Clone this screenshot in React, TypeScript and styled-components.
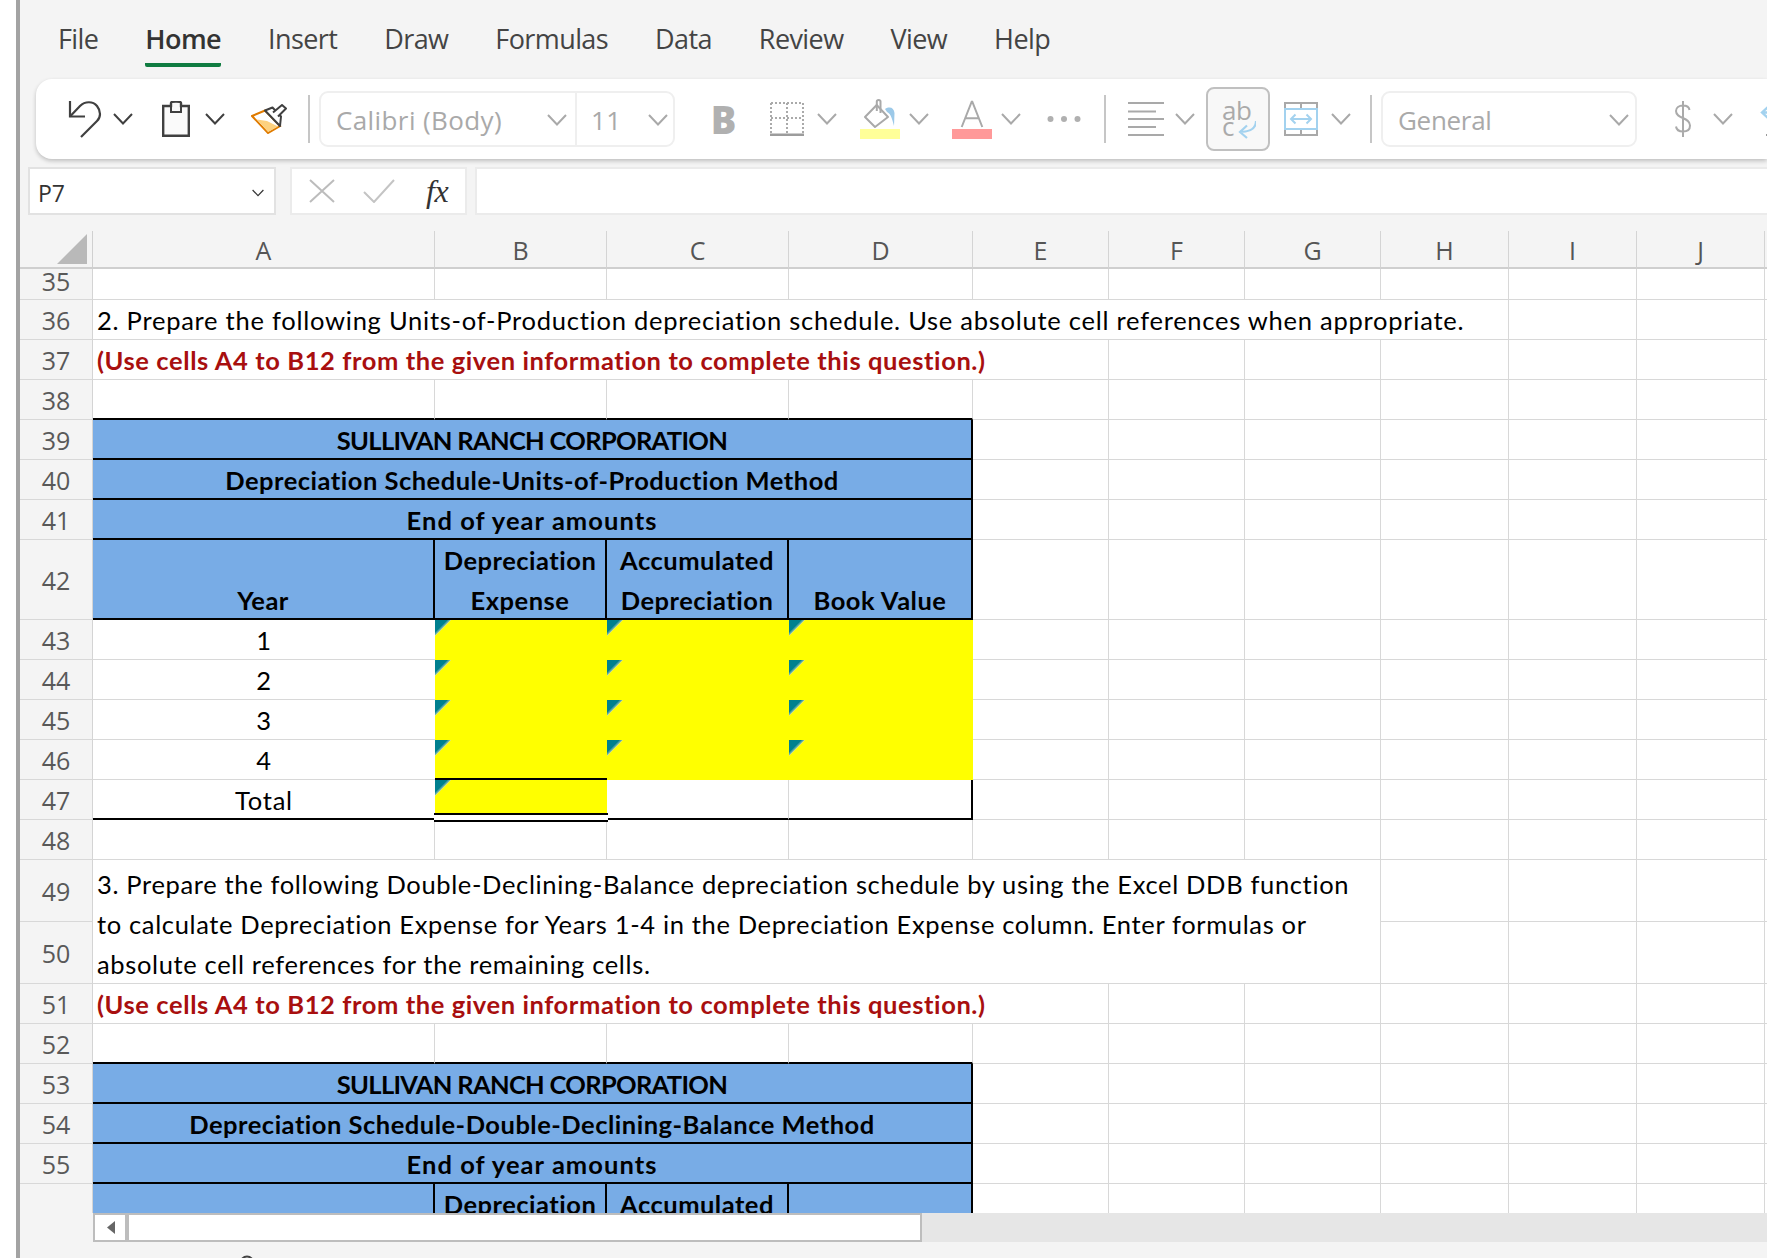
import React from "react";
import styled, { createGlobalStyle } from "styled-components";

const Global = createGlobalStyle`
  html, body { margin: 0; padding: 0; background: #fff; }
  * { box-sizing: border-box; }
`;

const Page = styled.div`
  width: 1767px; height: 1258px; overflow: hidden; background: #fff; padding-left: 16px;
  font-family: "Open Sans", "Liberation Sans", sans-serif;
`;
const Shell = styled.div`
  height: 100%; border-left: 4px solid #a3a3a3; background: #f4f4f4;
  display: flex; flex-direction: column; overflow: hidden;
`;
const TabBar = styled.nav`
  height: 79px; flex: none; display: flex; gap: 47px; padding-left: 38px; padding-top: 20px;
`;
const Tab = styled.div<{ $active?: boolean }>`
  height: 47px; font-size: 27px; line-height: 38px; letter-spacing: -0.6px; color: #444;
  font-weight: ${(p) => (p.$active ? 600 : 400)};
  ${(p) => p.$active && `color: #333; border-bottom: 4px solid #107c41; border-radius: 0 0 2px 2px;`}
`;
const Ribbon = styled.div`
  height: 80px; flex: none; margin-left: 16px; background: #fff; border-radius: 16px 0 0 16px;
  box-shadow: 0 2px 4px rgba(0, 0, 0, 0.22); display: flex; align-items: center; overflow: hidden;
`;
const Slot = styled.div<{ $ml: number; $w: number }>`
  margin-left: ${(p) => p.$ml}px; width: ${(p) => p.$w}px; flex: none; display: flex;
  align-items: center; justify-content: center;
  svg { display: block; flex: none; }
`;
const Sep = styled.div<{ $ml: number }>`
  margin-left: ${(p) => p.$ml}px; width: 2px; height: 48px; background: #c6c6c6; flex: none;
`;
const Combo = styled.div<{ $ml: number; $w: number; $ls?: number }>`
  margin-left: ${(p) => p.$ml}px; width: ${(p) => p.$w}px; height: 56px; flex: none; display: flex;
  align-items: center; border: 2px solid #efefef; border-radius: 9px; color: #a9a9a9;
  font-size: 26px; letter-spacing: ${(p) => p.$ls ?? -0.3}px;
`;
const ComboPart = styled.div<{ $w?: number; $pl: number; $pr: number }>`
  height: 100%; display: flex; align-items: center; justify-content: space-between;
  padding: 1px ${(p) => p.$pr}px 0 ${(p) => p.$pl}px;
  ${(p) => (p.$w ? `width: ${p.$w}px; flex: none;` : "flex: 1;")}
  & + & { border-left: 2px solid #efefef; }
`;
const BoldGlyph = styled.div`
  font-size: 38px; font-weight: 800; line-height: 40px; color: #b0b0b0; font-family: "Open Sans", sans-serif;
  letter-spacing: -1px;
`;
const WrapButton = styled.div`
  margin-left: 11px; width: 64px; height: 64px; flex: none; border: 2px solid #c0c0c0; border-radius: 8px;
  background: #f8f8f8; display: flex; align-items: center; justify-content: center;
`;
const FormulaRow = styled.div`
  height: 48px; flex: none; margin: 8px 0 16px 8px; display: flex;
`;
const NameBox = styled.div`
  width: 248px; border: 2px solid #e2e2e2; background: #fff; display: flex; align-items: center;
  justify-content: space-between; padding: 3px 10px 0 8px; font-size: 23px; color: #333;
`;
const FnBox = styled.div`
  margin-left: 14px; width: 177px; border: 2px solid #ebebeb; background: #fff; display: flex; align-items: center;
`;
const FxLabel = styled.span`
  font-family: "Liberation Serif", serif; font-style: italic; font-size: 32px; color: #333;
  margin-left: 31px; line-height: 40px; letter-spacing: -0.5px;
`;
const FormulaInput = styled.div`
  margin-left: 8px; flex: 1; margin-right: -6px; border: 2px solid #ebebeb; background: #fff;
`;

const Sheet = styled.div`
  height: 982px; flex: none; overflow: hidden; display: grid; background: #fff;
  grid-template-columns: 73px 342px 172px 182px 184px 136px 136px 136px 128px 128px 128px 1fr;
  grid-template-rows: 38px 31px 40px 40px 40px 40px 40px 40px 80px 40px 40px 40px 40px 40px 40px 62px 62px 40px 40px 40px 40px 40px 80px;
  font-family: "Lato", "Liberation Sans", sans-serif;
`;
const CornerCell = styled.div`
  background: #f4f4f4; border-right: 1px solid #d0d0d0; border-bottom: 2px solid #cfcfcf;
  display: flex; justify-content: flex-end; padding: 3px 5px 0 0;
`;
const CornerMark = styled.div`
  width: 30px; height: 30px; background: #b9b9b9; clip-path: polygon(100% 0, 100% 100%, 0 100%);
`;
const ColHead = styled.div`
  background: #f4f4f4; border-right: 1px solid #d4d4d4; border-bottom: 2px solid #cfcfcf;
  display: flex; align-items: center; justify-content: center; font-family: "Open Sans", sans-serif;
  font-size: 25px; color: #555; padding-top: 2px;
`;
const RowHead = styled.div<{ $pb?: number }>`
  background: #f4f4f4; border-right: 1px solid #d4d4d4; border-bottom: 1px solid #d8d8d8;
  display: flex; align-items: center; justify-content: center; font-family: "Open Sans", sans-serif;
  font-size: 25px; color: #595959; padding: 0 0 ${(p) => p.$pb ?? 0}px 0;
`;

type CellProps = {
  $span?: number; $rows?: number; $bg?: string; $bb?: boolean; $br?: boolean; $bare?: boolean;
  $center?: boolean; $bold?: boolean; $red?: boolean; $top?: number; $ls?: number;
};
const Cell = styled.div<CellProps>`
  position: relative; min-width: 0; white-space: nowrap; line-height: 40px; color: #000;
  font-size: 25.5px; padding: ${(p) => p.$top ?? 0}px 4px 0;
  letter-spacing: ${(p) => p.$ls ?? (p.$bold ? 0.5 : 0.75)}px;
  ${(p) => p.$span && `grid-column: span ${p.$span};`}
  ${(p) => p.$rows && `grid-row: span ${p.$rows};`}
  background: ${(p) => p.$bg ?? "#fff"};
  border-right: ${(p) => (p.$br ? "2px solid #000" : p.$bare ? "0" : "1px solid #d8d8d8")};
  border-bottom: ${(p) => (p.$bb ? "2px solid #000" : p.$bare ? "0" : "1px solid #d8d8d8")};
  ${(p) => p.$center && "text-align: center;"}
  ${(p) => p.$bold && "font-weight: 700;"}
  ${(p) => p.$red && "color: #a80f0f;"}
`;
const TotalCell = styled(Cell)`
  &::after {
    content: ""; position: absolute; z-index: 1; left: -1px; right: -1px; bottom: -2px; height: 5px;
    background: #fff; border-top: 2px solid #000; border-bottom: 2px solid #000;
  }
`;
const Marker = styled.div`
  position: absolute; top: 0; left: 0; width: 16px; height: 16px;
  background: linear-gradient(135deg, #00808f 0%, #00808f 38%, #7fb9a8 47%, #f4f4d0 52%);
  clip-path: polygon(0 0, 100% 0, 0 100%);
`;
const YearRule = styled.span`
  position: absolute; left: 0; right: 0; bottom: 0; height: 1px; background: #d8d8d8;
`;

const ScrollRow = styled.div`
  height: 29px; flex: none; display: flex; padding-left: 73px;
`;
const Track = styled.div`
  width: 829px; background: #fff; border: 2px solid #bdbdbd; display: flex; flex: none;
`;
const ScrollButton = styled.div`
  width: 34px; border-right: 4px solid #bdbdbd; display: flex; align-items: center; justify-content: center;
`;
const ScrollArrow = styled.div`
  width: 8px; height: 13px; background: #666; clip-path: polygon(100% 0, 100% 100%, 0 50%);
  margin-left: 2px;
`;
const TrackRest = styled.div`
  flex: 1; background: #e6e6e6;
`;
const Footer = styled.div`
  flex: 1; min-height: 0; overflow: hidden; padding: 13px 0 0 219px;
  svg { display: block; }
`;

const BLUE = "#78ace6";
const YELLOW = "#ffff00";
const DARK = "#404040";
const GREY = "#a9a9a9";
const SKY = "#a3d2ef";

const Chevron = ({ color = GREY, size = 20 }: { color?: string; size?: number }) => (
  <svg width={size} height={12} viewBox="0 0 20 12">
    <path d="M1 1 L10 10.5 L19 1" fill="none" stroke={color} strokeWidth="2" />
  </svg>
);
const ChevSlot = ({ ml, color }: { ml: number; color?: string }) => (
  <Slot $ml={ml} $w={20}><Chevron color={color} /></Slot>
);

const UndoIcon = () => (
  <svg width="34" height="38" viewBox="0 0 34 38">
    <path d="M2 1 V16.5 H17" fill="none" stroke={DARK} strokeWidth="2.2" />
    <path d="M2 16.5 L12 6 C17 1 25 1 29 6 C33 11 33 17 29 21 L13 37" fill="none" stroke={DARK} strokeWidth="2.2" />
  </svg>
);
const ClipIcon = () => (
  <svg width="28" height="36" viewBox="0 0 28 36">
    <path d="M1.2 5 H9 V2 C9 0.8 10 0.5 14 0.5 C18 0.5 19 0.8 19 2 V5 H26.8 V34.8 H1.2 Z" fill="#fafafa" stroke={DARK} strokeWidth="2.4" />
    <path d="M9 5 V11 H19 V5" fill="none" stroke={DARK} strokeWidth="2" />
  </svg>
);
const BrushIcon = () => (
  <svg width="36" height="30" viewBox="0 0 36 30">
    <path d="M1 12 L14 6.5 L29 22 L17 29 Z" fill="#fff" stroke="#e07b00" strokeWidth="2" />
    <path d="M6 15.5 L16 17 L27 22.5 L17 28 Z" fill="#fdd17f" />
    <path d="M14 6.5 L21.5 3.5 L30 12.5 L29 22 Z" fill="#fff" stroke={DARK} strokeWidth="2" strokeLinejoin="round" />
    <path d="M22 8.5 L31 1 L35 4.5 L27 12.5" fill="#fff" stroke={DARK} strokeWidth="2" strokeLinejoin="round" />
  </svg>
);
const BordersIcon = () => (
  <svg width="34" height="34" viewBox="0 0 34 34">
    <g fill="none" stroke="#aaa" strokeWidth="2" strokeDasharray="2 2">
      <path d="M1 1 H33 V31 M1 1 V31 M17 1 V31 M1 16 H33" />
    </g>
    <rect x="0" y="31.5" width="34" height="2.5" fill="#9c9c9c" />
  </svg>
);
const FillIcon = () => (
  <svg width="40" height="40" viewBox="0 0 40 40">
    <path d="M5 18 L16.7 6 L28 18 L15 28 Z" fill="none" stroke={GREY} strokeWidth="2" strokeLinejoin="round" />
    <path d="M16.8 12 V2.5 C16.8 0.5 20.5 0.5 20.5 2.5 V14" fill="none" stroke={GREY} strokeWidth="2" />
    <path d="M25 10 C30 7 34 9 34.5 14 L34 27 C32.5 22 31.5 15 27 13 Z" fill="#9cc9e8" />
    <rect x="0" y="30" width="40" height="10" fill="#ffff99" />
  </svg>
);
const FontColorIcon = () => (
  <svg width="40" height="40" viewBox="0 0 40 40">
    <path d="M9.7 28 L19.7 2.7 H20.3 L30.3 28 M13 19.3 H27" fill="none" stroke={GREY} strokeWidth="2" />
    <rect x="0" y="30" width="40" height="10" fill="#ff9999" />
  </svg>
);
const DotsIcon = () => (
  <svg width="34" height="8" viewBox="0 0 34 8">
    <circle cx="3.5" cy="4" r="3" fill="#b0b0b0" /><circle cx="17" cy="4" r="3" fill="#b0b0b0" /><circle cx="30.5" cy="4" r="3" fill="#b0b0b0" />
  </svg>
);
const AlignIcon = () => (
  <svg width="36" height="34" viewBox="0 0 36 34">
    <path d="M0 1 H36 M0 9.5 H28 M0 17 H36 M0 25 H28 M0 33 H36" fill="none" stroke="#a9a9a9" strokeWidth="2" />
  </svg>
);
const WrapIcon = () => (
  <svg width="36" height="56" viewBox="0 -8 36 56">
    <text x="2" y="21" fontFamily="Open Sans, sans-serif" fontSize="26" fill="#aaa" letterSpacing="-0.5">ab</text>
    <text x="2" y="37" fontFamily="Open Sans, sans-serif" fontSize="26" fill="#aaa">c</text>
    <path d="M36 22 C36 30 30 33 20 33 M27 26.5 L20 33 L27 39" fill="none" stroke={SKY} strokeWidth="2.2" />
  </svg>
);
const MergeIcon = () => (
  <svg width="34" height="34" viewBox="0 0 34 34">
    <rect x="1" y="1" width="32" height="32" fill="none" stroke="#a9a9a9" strokeWidth="2" />
    <path d="M17 1 V33" stroke="#a9a9a9" strokeWidth="2" />
    <rect x="1" y="7" width="32" height="20" fill="#fff" stroke={SKY} strokeWidth="2" />
    <path d="M7 17 H27 M11.5 12.5 L7 17 L11.5 21.5 M22.5 12.5 L27 17 L22.5 21.5" fill="none" stroke={SKY} strokeWidth="2" />
  </svg>
);
const DollarIcon = () => (
  <svg width="18" height="36" viewBox="0 0 18 36">
    <path d="M15.5 9 C15 5.5 12.5 4.5 9 4.5 C5 4.5 2 6.5 2 10 C2 18 16 16 16 24.5 C16 28.5 13 30.5 9 30.5 C5 30.5 2.5 29 2 25.5 M9 0 V36" fill="none" stroke="#aaa" strokeWidth="2" />
  </svg>
);
const NextIcon = () => (
  <svg width="30" height="36" viewBox="0 0 30 36">
    <path d="M11 3 L2 11.5 L11 20 M2 11.5 H24" fill="none" stroke={SKY} strokeWidth="2.4" />
    <rect x="6" y="33" width="2" height="2" fill="#999" />
  </svg>
);
const CancelIcon = () => (
  <svg width="26" height="24" viewBox="0 0 26 24">
    <path d="M1 1 L25 23 M25 1 L1 23" fill="none" stroke="#bcbcbc" strokeWidth="2" />
  </svg>
);
const ConfirmIcon = () => (
  <svg width="32" height="24" viewBox="0 0 32 24">
    <path d="M1 13 L11 23 L31 1" fill="none" stroke="#c4c4c4" strokeWidth="2" />
  </svg>
);

const blanks = (n: number, key: string) =>
  Array.from({ length: n }, (_, i) => <Cell key={key + i} />);
const head = (n: number) => <RowHead key={"h" + n}>{n}</RowHead>;

const plain = (n: number) => [head(n), ...blanks(11, "r" + n)];

const longRow = (n: number, text: string, span: number, red?: boolean) => [
  head(n),
  <Cell key={"t" + n} $span={span} $bold={red} $red={red} $ls={red ? 0.59 : undefined}>{text}</Cell>,
  ...blanks(11 - span, "r" + n),
];

const aboveTable = (n: number) => [
  head(n),
  <Cell key={n + "a"} $bb />,
  <Cell key={n + "b"} $bb />,
  <Cell key={n + "c"} $bb />,
  <Cell key={n + "d"} $bb />,
  ...blanks(7, "r" + n),
];

const titleRow = (n: number, text: string, ls?: number) => [
  head(n),
  <Cell key={"t" + n} $span={4} $bg={BLUE} $bb $br $center $bold $ls={ls}>{text}</Cell>,
  ...blanks(7, "r" + n),
];

const columnHeads = (n: number) => [
  head(n),
  <Cell key={n + "a"} $bg={BLUE} $bb $br $center $bold $top={40}>Year</Cell>,
  <Cell key={n + "b"} $bg={BLUE} $bb $br $center $bold>Depreciation<br />Expense</Cell>,
  <Cell key={n + "c"} $bg={BLUE} $bb $br $center $bold>Accumulated<br />Depreciation</Cell>,
  <Cell key={n + "d"} $bg={BLUE} $bb $br $center $bold $top={40}>Book Value</Cell>,
  ...blanks(7, "r" + n),
];

const yearRow = (n: number, year: number) => [
  head(n),
  <Cell key={n + "a"} $center $bare>{year}<YearRule /></Cell>,
  <Cell key={n + "b"} $bg={YELLOW} $bare $bb={year === 4}><Marker /></Cell>,
  <Cell key={n + "c"} $bg={YELLOW} $bare><Marker /></Cell>,
  <Cell key={n + "d"} $bg={YELLOW} $bare><Marker /></Cell>,
  ...blanks(7, "r" + n),
];

const App = () => (
  <Page>
    <Global />
    <Shell>
      <TabBar>
        <Tab>File</Tab>
        <Tab $active>Home</Tab>
        <Tab>Insert</Tab>
        <Tab>Draw</Tab>
        <Tab>Formulas</Tab>
        <Tab>Data</Tab>
        <Tab>Review</Tab>
        <Tab>View</Tab>
        <Tab>Help</Tab>
      </TabBar>
      <Ribbon>
        <Slot $ml={32} $w={34}><UndoIcon /></Slot>
        <ChevSlot ml={11} color={DARK} />
        <Slot $ml={29} $w={28}><ClipIcon /></Slot>
        <ChevSlot ml={15} color={DARK} />
        <Slot $ml={26} $w={36}><BrushIcon /></Slot>
        <Sep $ml={21} />
        <Combo $ml={9} $w={356} $ls={0.4}>
          <ComboPart $w={254} $pl={15} $pr={8}>Calibri (Body)<Chevron /></ComboPart>
          <ComboPart $pl={14} $pr={5}>11<Chevron /></ComboPart>
        </Combo>
        <Slot $ml={37} $w={22}><BoldGlyph>B</BoldGlyph></Slot>
        <Slot $ml={36} $w={34}><BordersIcon /></Slot>
        <ChevSlot ml={13} />
        <Slot $ml={23} $w={40}><FillIcon /></Slot>
        <ChevSlot ml={9} />
        <Slot $ml={23} $w={40}><FontColorIcon /></Slot>
        <ChevSlot ml={9} />
        <Slot $ml={26} $w={34}><DotsIcon /></Slot>
        <Sep $ml={23} />
        <Slot $ml={22} $w={36}><AlignIcon /></Slot>
        <ChevSlot ml={11} />
        <WrapButton><WrapIcon /></WrapButton>
        <Slot $ml={14} $w={34}><MergeIcon /></Slot>
        <ChevSlot ml={13} />
        <Sep $ml={19} />
        <Combo $ml={9} $w={256}>
          <ComboPart $pl={15} $pr={6}>General<Chevron /></ComboPart>
        </Combo>
        <Slot $ml={37} $w={18}><DollarIcon /></Slot>
        <ChevSlot ml={21} />
        <Slot $ml={27} $w={30}><NextIcon /></Slot>
      </Ribbon>
      <FormulaRow>
        <NameBox>P7<Chevron color="#333" size={12} /></NameBox>
        <FnBox>
          <Slot $ml={17} $w={26}><CancelIcon /></Slot>
          <Slot $ml={28} $w={32}><ConfirmIcon /></Slot>
          <FxLabel>fx</FxLabel>
        </FnBox>
        <FormulaInput />
      </FormulaRow>
      <Sheet>
        <CornerCell><CornerMark /></CornerCell>
        {"ABCDEFGHIJ".split("").map((c) => <ColHead key={c}>{c}</ColHead>)}
        <ColHead />
        <RowHead $pb={7}>35</RowHead>
        {blanks(11, "r35")}
        {longRow(36, "2. Prepare the following Units-of-Production depreciation schedule. Use absolute cell references when appropriate.", 8)}
        {longRow(37, "(Use cells A4 to B12 from the given information to complete this question.)", 5, true)}
        {aboveTable(38)}
        {titleRow(39, "SULLIVAN RANCH CORPORATION", -0.7)}
        {titleRow(40, "Depreciation Schedule-Units-of-Production Method")}
        {titleRow(41, "End of year amounts", 1.05)}
        {columnHeads(42)}
        {yearRow(43, 1)}
        {yearRow(44, 2)}
        {yearRow(45, 3)}
        {yearRow(46, 4)}
        {head(47)}
        <Cell $center $bb $bare>Total</Cell>
        <TotalCell $bg={YELLOW} $bare><Marker /></TotalCell>
        <Cell $bb />
        <Cell $bb $br />
        {blanks(7, "r47")}
        {plain(48)}
        {head(49)}
        <Cell $span={7} $rows={2} $top={4} $ls={0.65}>
          3. Prepare the following Double-Declining-Balance depreciation schedule by using the Excel DDB function<br />
          to calculate Depreciation Expense for Years 1-4 in the Depreciation Expense column. Enter formulas or<br />
          absolute cell references for the remaining cells.
        </Cell>
        {blanks(4, "r49")}
        {head(50)}
        {blanks(4, "r50")}
        {longRow(51, "(Use cells A4 to B12 from the given information to complete this question.)", 5, true)}
        {aboveTable(52)}
        {titleRow(53, "SULLIVAN RANCH CORPORATION", -0.7)}
        {titleRow(54, "Depreciation Schedule-Double-Declining-Balance Method")}
        {titleRow(55, "End of year amounts", 1.05)}
        {columnHeads(56)}
      </Sheet>
      <ScrollRow>
        <Track>
          <ScrollButton><ScrollArrow /></ScrollButton>
        </Track>
        <TrackRest />
      </ScrollRow>
      <Footer>
        <svg width="16" height="16" viewBox="0 0 16 16">
          <circle cx="8" cy="8" r="6.5" fill="none" stroke="#444" strokeWidth="2" />
        </svg>
      </Footer>
    </Shell>
  </Page>
);

export default App;
